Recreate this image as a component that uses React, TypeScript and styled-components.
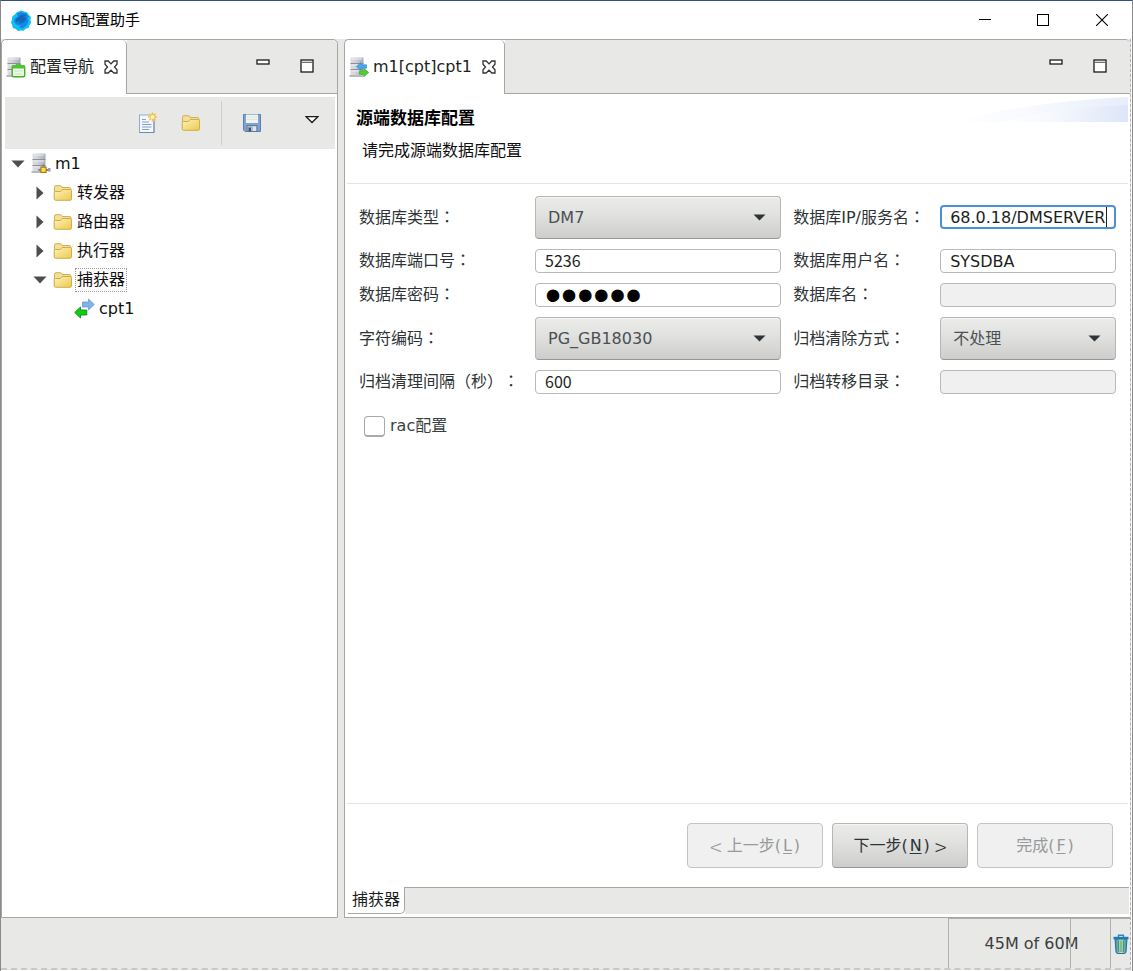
import React, { useState } from "react";
import styled, { createGlobalStyle, css } from "styled-components";

const GlobalStyle = createGlobalStyle`
  *, *::before, *::after { box-sizing: border-box; }
  body {
    margin: 0;
    background: #ffffff;
    color: #1c1f20;
    font-family: "DejaVu Sans", "Noto Sans CJK SC", sans-serif;
    font-size: 16px;
    line-height: 24px;
  }
  button, input, select { font: inherit; color: inherit; margin: 0; }
  ul { list-style: none; margin: 0; padding: 0; }
`;

const cjk = css`
  font-family: "Noto Sans CJK SC", sans-serif;
`;

/* Window frame */

const Frame = styled.div`
  display: flex;
  flex-direction: column;
  min-height: 100vh;
  border: 1px solid #8a8a8a;
  border-top-color: #2f5080;
  border-bottom: 0;
  background: #ffffff;
`;

const TitleBar = styled.header`
  display: flex;
  align-items: center;
  height: 38px;
  padding-left: 10px;
  background: #ffffff;
`;

const TitleText = styled.h1`
  flex: 1;
  margin: 0 0 2px 4px;
  font-family: "Noto Sans", "Noto Sans CJK SC", sans-serif;
  font-size: 15px;
  font-weight: 400;
  line-height: 24px;
  color: #000000;
`;

const IconButton = styled.button<{ $width?: number }>`
  display: flex;
  align-items: center;
  justify-content: center;
  width: ${(p) => p.$width ?? 32}px;
  height: 32px;
  padding: 0;
  border: 0;
  background: none;
`;

const Workbench = styled.div`
  display: flex;
  flex-direction: column;
  flex: 1;
  margin: 0 1px 1px 0;
  border-right: 1px dashed #b4b4b4;
  border-bottom: 2px dashed #c8c8c8;
  background: #e8e8e7;
`;

const Panels = styled.div`
  display: flex;
  flex: 1;
  gap: 6px;
`;

/* Panels and tabs */

const panel = css`
  display: flex;
  flex-direction: column;
  border: 1px solid #a6a6a5;
  border-radius: 5px 5px 0 0;
  background: #ffffff;
`;

const NavPanel = styled.aside`
  ${panel}
  flex: 0 0 337px;
`;

const EditorPanel = styled.main`
  ${panel}
  flex: 1;
  min-width: 0;
  border-right: 0;
`;

const TabBar = styled.div`
  display: flex;
  height: 54px;
`;

const Tab = styled.div`
  display: flex;
  align-items: center;
  padding: 0 8px 0 4px;
  border-right: 1px solid #a6a6a5;
  border-radius: 5px 5px 0 0;
  background: #ffffff;
`;

const TabLabel = styled.span`
  margin-left: 4px;
  white-space: nowrap;
`;

const TabClose = styled.button`
  display: flex;
  margin-left: 10px;
  padding: 0;
  border: 0;
  background: none;
`;

const TabBarRest = styled.div`
  display: flex;
  flex: 1;
  align-items: center;
  justify-content: flex-end;
  padding: 0 8px 2px 0;
  border-bottom: 1px solid #a6a6a5;
  border-radius: 0 5px 0 0;
  background: #e8e8e7;
`;

const Toolbar = styled.div`
  display: flex;
  align-items: center;
  justify-content: flex-end;
  height: 52px;
  margin: 3px 2px 0 3px;
  padding-right: 7px;
  background: #e8e8e7;
`;

const ToolGroup = styled.div`
  display: flex;
  gap: 11px;
`;

const ToolDivider = styled.span`
  width: 1px;
  height: 44px;
  margin: 0 14px;
  background: #cfcfce;
`;

const ToolMenu = styled.div`
  margin-left: 28px;
`;

/* Tree */

const TreeRow = styled.div<{ $level: number }>`
  display: flex;
  align-items: center;
  height: 29px;
  padding-left: ${(p) => 6 + p.$level * 22}px;
  color: #101010;
`;

const Twisty = styled.button`
  display: flex;
  align-items: center;
  justify-content: center;
  width: 20px;
  height: 20px;
  margin-right: 3px;
  padding: 0;
  border: 0;
  background: none;
`;

const TwistySpace = styled.span`
  width: 22px;
`;

const TreeLabel = styled.span<{ $focused?: boolean }>`
  margin-left: 3px;
  padding: 0 1px;
  line-height: 22px;
  outline: ${(p) => (p.$focused ? "1px dotted #9a9a9a" : "none")};
`;

/* Wizard */

const WizardHeader = styled.div`
  position: relative;
  height: 90px;
  margin: 0 2px;
  padding: 12px 0 0 9px;
  border-bottom: 1px solid #e4e4e4;
`;

const HeaderArt = styled.svg`
  position: absolute;
  top: 3px;
  right: 0;
`;

const Heading = styled.h2`
  margin: 0;
  font-size: 17px;
  font-weight: 700;
  line-height: 24px;
  color: #000000;
`;

const Description = styled.p`
  margin: 9px 0 0 6px;
  color: #101010;
`;

const Form = styled.form`
  display: flex;
  flex-direction: column;
  flex: 1;
`;

const Fields = styled.div`
  display: grid;
  grid-template-columns: 164px minmax(0, 7fr) 135px minmax(0, 5fr);
  grid-template-rows: 43px 24px 24px 43px 24px;
  gap: 10px 12px;
  align-items: center;
  padding: 12px 14px 0;
`;

const FieldLabel = styled.label`
  white-space: nowrap;
  text-spacing-trim: space-all;
  color: #2e3436;
`;

/* The traditional variant centres the full-width colon in its cell. */
const Colon = styled.span`
  font-family: "DejaVu Sans", "Noto Sans CJK TC", sans-serif;
`;

const TextInput = styled.input<{ $cjk?: boolean; $active?: boolean }>`
  width: 100%;
  height: 24px;
  padding: 0 9px;
  border: 1px solid #b9b9b6;
  border-radius: 4px;
  outline: 0;
  background: #ffffff;
  color: #1c1f20;
  line-height: 22px;
  ${(p) =>
    p.$cjk &&
    css`
      ${cjk}
      padding-bottom: 2px;
      line-height: 20px;
    `}
  ${(p) =>
    p.$active &&
    css`
      padding: 0 8px;
      border: 2px solid #4a90d9;
    `}
  &:disabled {
    background: #f0f0f0;
  }
`;

const PasswordInput = styled(TextInput)`
  font-family: "Liberation Sans", sans-serif;
  font-size: 46px;
  color: #000000;
`;

const ActiveField = styled.div`
  position: relative;
`;

const Caret = styled.span`
  position: absolute;
  top: 2px;
  right: 9px;
  width: 1px;
  height: 20px;
  background: #1c1f20;
`;

const SelectBox = styled.div`
  position: relative;
  height: 43px;
`;

const raised = css`
  border: 1px solid #b6b6b3;
  border-bottom-color: #979794;
  border-radius: 4px;
  background: linear-gradient(#ebebea, #e2e2e1 40%, #cdcdcc);
  box-shadow: inset 0 1px 0 #f6f6f5;
`;

const Select = styled.select`
  ${raised}
  width: 100%;
  height: 43px;
  padding: 0 40px 0 12px;
  appearance: none;
  color: #4b5052;
`;

const SelectArrow = styled.svg`
  position: absolute;
  top: 18px;
  right: 15px;
  pointer-events: none;
`;

const CheckRow = styled.label`
  display: flex;
  align-items: center;
  gap: 5px;
  margin: 20px 14px 0 19px;
  color: #3a3f41;
`;

const Checkbox = styled.input`
  width: 21px;
  height: 21px;
  appearance: none;
  border: 1px solid #a9a9a6;
  border-bottom-width: 2px;
  border-radius: 4px;
  background: #ffffff;
`;

const Actions = styled.div`
  display: flex;
  justify-content: flex-end;
  gap: 9px;
  margin: auto 2px 0;
  padding: 19px 15px 19px;
  border-top: 1px solid #e4e4e4;
`;

const ActionButton = styled.button`
  ${raised}
  display: flex;
  align-items: center;
  justify-content: center;
  width: 136px;
  height: 45px;
  padding: 0;
  color: #2e3436;
  &:disabled {
    border-color: #c4c4c2;
    background: #f0f0f0;
    box-shadow: none;
    color: #979a9b;
  }
`;

const Angle = styled.span<{ $side: "left" | "right" }>`
  ${cjk}
  margin: ${(p) => (p.$side === "left" ? "0 5px 0 0" : "0 0 0 5px")};
  font-size: 22px;
  font-weight: 300;
  line-height: 24px;
`;

const Mnemonic = styled.u`
  margin: 0 2px;
  text-underline-offset: 2px;
`;

const PageTabs = styled.div`
  display: flex;
  height: 27px;
  margin-bottom: 3px;
`;

const PageTab = styled.button`
  margin-left: 3px;
  padding: 0 4px;
  border: solid #a6a6a5;
  border-width: 0 1px 1px 0;
  border-radius: 0 0 5px 0;
  background: #ffffff;
  line-height: 24px;
`;

const PageTabsRest = styled.div`
  flex: 1;
  margin-right: 1px;
  border-top: 1px solid #a6a6a5;
  background: #e8e8e7;
`;

/* Status bar */

const StatusBar = styled.footer`
  display: flex;
  justify-content: flex-end;
  height: 50px;
`;

const HeapStatus = styled.div`
  position: relative;
  width: 163px;
  padding-left: 4px;
  border: solid #b0b0af;
  border-width: 1px 1px 0;
  text-align: center;
  line-height: 50px;
  color: #3a3f41;
`;

const HeapMark = styled.span`
  position: absolute;
  top: 0;
  bottom: 0;
  border-left: 1px solid #b0b0af;
`;

const TrashButton = styled.button`
  display: flex;
  align-items: center;
  width: 19px;
  padding: 0 0 0 2px;
  border: 0;
  border-top: 1px solid #b0b0af;
  background: none;
`;

/* Icons */

const AppLogo = () => (
  <svg width="21" height="21" viewBox="0 0 21 21" aria-hidden="true">
    <path d="M10 0.5l3 1 3 .7 1.700 2.600 2.300 2.200-.6 3 .8 2.500-1.600 2.500-.8 2.800-3 .9-2.200 2-2.800-.3-2.800.6-2.300-1.900-2.900-1.300-.7-3-1.100-2.600 1-2.800.2-3 2.600-1.900 2-2.300z" fill="#12bdf8" />
    <path d="M6 3.500l4-1.200 5 1 3 3.500-2 1 1.500 3-1.500 4-4 3.500-4-.5 2-2-4-.8-3-3 1-4 3-1z" fill="#1585dd" />
    <path d="M5 9l5-4 6-1-3 3 3 1-3 4-5 2 1-3-4 1z" fill="#1267bd" />
  </svg>
);

const CloseX = () => (
  <svg width="14" height="14" viewBox="0 0 14 14" aria-hidden="true">
    <path
      d="M1 1h3.200L7 3.900 9.800 1H13v3.200L10.500 7 13 9.800V13H9.800L7 10.100 4.200 13H1V9.800L3.500 7 1 4.200z"
      fill="#fff"
      stroke="#343434"
      strokeWidth="1.300"
    />
  </svg>
);

const MinimizeIcon = () => (
  <svg width="14" height="14" viewBox="0 0 14 14" aria-hidden="true">
    <rect x="1" y="1" width="12" height="4" fill="#fff" stroke="#1b1b1b" strokeWidth="1.300" />
  </svg>
);

const MaximizeIcon = () => (
  <svg width="14" height="14" viewBox="0 0 14 14" aria-hidden="true">
    <rect x="1" y="1" width="12" height="12" fill="#fff" stroke="#1b1b1b" strokeWidth="1.300" />
    <path d="M2 3.300h10" stroke="#4a4a4a" strokeWidth="1" />
  </svg>
);

const Server = () => (
  <g>
    <defs>
      <linearGradient id="bay" x1="0" x2="1">
        <stop offset="0" stopColor="#dcdee2" />
        <stop offset="0.350" stopColor="#d3d5da" />
        <stop offset="1" stopColor="#a7abb4" />
      </linearGradient>
    </defs>
    <path d="M2.500 0.500h11q1 0 1 1V18h-13V1.500q0-1 1-1z" fill="url(#bay)" />
    <path d="M3 2h10M3 8h10M3 14h10" stroke="#eceef1" strokeWidth="1.200" />
    <path d="M1.500 6.500h13M1.500 12.500h13" stroke="#8b8f98" strokeWidth="1.200" />
    <path d="M0.500 19h14.500" stroke="#9a9da4" strokeWidth="1.400" />
  </g>
);

const NavIcon = () => (
  <svg width="20" height="21" viewBox="0 0 20 21" aria-hidden="true">
    <Server />
    <rect x="6.200" y="8.700" width="12.500" height="11" rx="1.500" fill="#effae8" stroke="#3fb02a" strokeWidth="1.400" />
    <path d="M6.500 8.500Q6.500 8 7.500 8h2l1-1.200h4L15.500 8h2q1.200 0 1.200 1.200v2.300H6.500z" fill="#52c238" />
    <path d="M8.500 14h8M8.500 17h8" stroke="#c3e6b6" strokeWidth="1.200" />
  </svg>
);

const CaptureEditorIcon = () => (
  <svg width="20" height="21" viewBox="0 0 20 21" aria-hidden="true">
    <Server />
    <path d="M7.500 9.500L12 5.700v2.100h5.500v3.400H12v2.100z" fill="#4da6ee" stroke="#2b83d0" strokeWidth="0.600" />
    <path d="M19.700 15.500l-4.500-4v2.300H10.500v3.400h4.700v2.300z" fill="#4fd22c" stroke="#2fa51a" strokeWidth="0.600" />
  </svg>
);

const HostIcon = () => (
  <svg width="20" height="21" viewBox="0 0 20 21" aria-hidden="true">
    <Server />
    <path d="M12.500 11.500v3M7.500 17h3M15 17h4" stroke="#7183a6" strokeWidth="2" />
    <rect x="17" y="15" width="2.500" height="3.500" fill="#8b9dc0" />
    <rect x="9.900" y="14.200" width="5.200" height="5.200" fill="#ffdc50" stroke="#a9800f" strokeWidth="1.200" />
  </svg>
);

const FolderIcon = () => (
  <svg width="20" height="18" viewBox="0 0 20 18" aria-hidden="true">
    <defs>
      <linearGradient id="folder" x1="0" x2="1" y1="0" y2="1">
        <stop offset="0" stopColor="#fdf3b8" />
        <stop offset="1" stopColor="#ecc94f" />
      </linearGradient>
    </defs>
    <path d="M1.500 14V3.300Q1.500 1.700 3 1.700h4.300Q8.700 1.700 9.200 3.500h7.300Q17.800 3.500 17.800 5v9z" fill="#f4df96" stroke="#cfae56" strokeWidth="1" />
    <path d="M1.200 8.500Q1.200 7.500 2.200 7.500h5.300l1.700-2h8.300Q18.500 5.500 18.500 6.500v8.300q0 1.500-1.500 1.500H2.700q-1.500 0-1.500-1.500z" fill="url(#folder)" stroke="#d2ac48" strokeWidth="1" />
  </svg>
);

const NewFileIcon = () => (
  <svg width="20" height="22" viewBox="0 0 20 22" aria-hidden="true">
    <rect x="1.500" y="3" width="14.500" height="17.500" fill="#f4f8fe" stroke="#97a9c9" strokeWidth="1" />
    <path d="M1.500 20.500H16V9" fill="none" stroke="#6f89b5" strokeWidth="1" />
    <path d="M4 7.500h4M4 10h7M4 12.500h9.500M4 15h9.500M4 17.500h7" stroke="#86a0cc" strokeWidth="1" />
    <path d="M14.500 0.500v9M10 5h9M11.300 1.800l6.400 6.400M17.700 1.800l-6.400 6.400" stroke="#efc440" strokeWidth="1.400" />
    <circle cx="14.500" cy="5" r="2" fill="#fff3ad" />
  </svg>
);

const SaveIcon = () => (
  <svg width="20" height="20" viewBox="0 0 20 20" aria-hidden="true">
    <path d="M1.500 1.500h17v17H3L1.500 17z" fill="#7fa3d4" stroke="#5b7fb2" strokeWidth="1" />
    <path d="M4 1.500h12v8.500H4z" fill="#eff5ee" />
    <path d="M4.500 4h11M4.500 6.500h11" stroke="#d5e3d2" strokeWidth="0.800" />
    <path d="M5 12.500h10v6H5z" fill="#b3bcc9" stroke="#56708f" strokeWidth="0.800" />
    <path d="M6.500 14.500h2.500v4H6.500z" fill="#41546f" />
    <path d="M11 13.500h3V18h-3z" fill="#dfe4ea" />
  </svg>
);

const TransferIcon = () => (
  <svg width="21" height="21" viewBox="0 0 21 21" aria-hidden="true">
    <path d="M20.300 6.500L14.500 1v3H8.500v5h6v3z" fill="#7fb2ea" stroke="#5b93d3" strokeWidth="0.700" />
    <path d="M0.700 14.500L6.500 9v3h6.300v5H6.500v3z" fill="#0dcf12" stroke="#0a7f10" strokeWidth="0.800" />
  </svg>
);

const TrashIcon = () => (
  <svg width="16" height="20" viewBox="0 0 16 20" aria-hidden="true">
    <defs>
      <linearGradient id="bin" x1="0" x2="1">
        <stop offset="0" stopColor="#2384bd" />
        <stop offset="0.500" stopColor="#e6ea72" />
        <stop offset="1" stopColor="#2384bd" />
      </linearGradient>
    </defs>
    <path d="M2 5h12l-1 13q-.2 1.500-2 1.500H5Q3.200 19.500 3 18z" fill="url(#bin)" stroke="#1a74b0" strokeWidth="1" />
    <path d="M5.300 6.500l.4 11.500M8 6.500V18M10.700 6.500l-.4 11.500" stroke="#2f8fb0" strokeWidth="1" />
    <path d="M0.500 4h15" stroke="#1b7ab8" strokeWidth="2.400" />
    <path d="M5.500 3V1.200h5V3" fill="none" stroke="#2b88c0" strokeWidth="1.400" />
  </svg>
);

const Arrow = ({ open }: { open: boolean }) => (
  <svg width="14" height="14" viewBox="0 0 14 14" aria-hidden="true">
    <path d={open ? "M0.500 3.500h13L7 10.500z" : "M3.500 0.500v13l7-6.500z"} fill="#4d4d4d" />
  </svg>
);

/* Form parts */

type LabelProps = { id: string; text: string };

const Label = ({ id, text }: LabelProps) => (
  <FieldLabel htmlFor={id}>
    {text}
    <Colon>：</Colon>
  </FieldLabel>
);

const Dropdown = ({ id, options }: { id: string; options: string[] }) => (
  <SelectBox>
    <Select id={id} defaultValue={options[0]}>
      {options.map((o) => (
        <option key={o}>{o}</option>
      ))}
    </Select>
    <SelectArrow width="13" height="7" viewBox="0 0 13 7" aria-hidden="true">
      <path d="M0.500 0.500h12L6.500 6.500z" fill="#2e3436" />
    </SelectArrow>
  </SelectBox>
);

const PanelControls = () => (
  <TabBarRest>
    <IconButton type="button" $width={44} aria-label="最小化">
      <MinimizeIcon />
    </IconButton>
    <IconButton type="button" $width={44} aria-label="最大化">
      <MaximizeIcon />
    </IconButton>
  </TabBarRest>
);

const folders = [
  { name: "转发器", open: false },
  { name: "路由器", open: false },
  { name: "执行器", open: false },
  { name: "捕获器", open: true },
];

const NavTree = () => (
  <ul>
    <li>
      <TreeRow $level={0}>
        <Twisty type="button" aria-label="折叠 m1">
          <Arrow open />
        </Twisty>
        <HostIcon />
        <TreeLabel>m1</TreeLabel>
      </TreeRow>
      <ul>
        {folders.map((f) => (
          <li key={f.name}>
            <TreeRow $level={1}>
              <Twisty type="button" aria-label={f.name}>
                <Arrow open={f.open} />
              </Twisty>
              <FolderIcon />
              <TreeLabel $focused={f.open}>{f.name}</TreeLabel>
            </TreeRow>
            {f.open && (
              <ul>
                <li>
                  <TreeRow $level={2}>
                    <TwistySpace />
                    <TransferIcon />
                    <TreeLabel>cpt1</TreeLabel>
                  </TreeRow>
                </li>
              </ul>
            )}
          </li>
        ))}
      </ul>
    </li>
  </ul>
);

export default function App() {
  const [server, setServer] = useState("68.0.18/DMSERVER");

  return (
    <>
      <GlobalStyle />
      <Frame>
        <TitleBar>
          <AppLogo />
          <TitleText>DMHS配置助手</TitleText>
          <IconButton type="button" $width={58} aria-label="最小化窗口">
            <svg width="12" height="12" viewBox="0 0 12 12">
              <path d="M0 5.500h12" stroke="#000" />
            </svg>
          </IconButton>
          <IconButton type="button" $width={58} aria-label="最大化窗口">
            <svg width="12" height="12" viewBox="0 0 12 12">
              <rect x="0.500" y="0.500" width="11" height="11" fill="none" stroke="#000" />
            </svg>
          </IconButton>
          <IconButton type="button" $width={60} aria-label="关闭窗口">
            <svg width="12" height="12" viewBox="0 0 12 12">
              <path d="M0 0l12 12M12 0L0 12" stroke="#000" strokeWidth="1.100" />
            </svg>
          </IconButton>
        </TitleBar>

        <Workbench>
          <Panels>
            <NavPanel>
              <TabBar>
                <Tab>
                  <NavIcon />
                  <TabLabel>配置导航</TabLabel>
                  <TabClose type="button" aria-label="关闭">
                    <CloseX />
                  </TabClose>
                </Tab>
                <PanelControls />
              </TabBar>
              <Toolbar>
                <ToolGroup>
                  <IconButton type="button" aria-label="新建">
                    <NewFileIcon />
                  </IconButton>
                  <IconButton type="button" aria-label="打开">
                    <FolderIcon />
                  </IconButton>
                </ToolGroup>
                <ToolDivider />
                <IconButton type="button" aria-label="保存">
                  <SaveIcon />
                </IconButton>
                <ToolMenu>
                  <IconButton type="button" aria-label="菜单">
                    <svg width="14" height="16" viewBox="0 0 14 16">
                      <path d="M1.200 1.700h11.600L7 7.500z" fill="#fff" stroke="#1b1b1b" strokeWidth="1.300" />
                    </svg>
                  </IconButton>
                </ToolMenu>
              </Toolbar>
              <NavTree />
            </NavPanel>

            <EditorPanel>
              <TabBar>
                <Tab>
                  <CaptureEditorIcon />
                  <TabLabel>m1[cpt]cpt1</TabLabel>
                  <TabClose type="button" aria-label="关闭">
                    <CloseX />
                  </TabClose>
                </Tab>
                <PanelControls />
              </TabBar>
              <WizardHeader>
                <HeaderArt width="176" height="25" viewBox="0 0 176 25" aria-hidden="true">
                  <defs>
                    <linearGradient id="fan" x1="0" x2="1">
                      <stop offset="0" stopColor="#ffffff" />
                      <stop offset="0.400" stopColor="#f6f8fe" />
                      <stop offset="1" stopColor="#dde6f8" />
                    </linearGradient>
                  </defs>
                  <path d="M0 25Q80 4 176 0v25z" fill="url(#fan)" opacity="0.700" />
                  <path d="M50 25Q100 11 176 8v17z" fill="url(#fan)" />
                </HeaderArt>
                <Heading>源端数据库配置</Heading>
                <Description>请完成源端数据库配置</Description>
              </WizardHeader>

              <Form onSubmit={(e) => e.preventDefault()}>
                <Fields>
                  <Label id="db-type" text="数据库类型" />
                  <Dropdown id="db-type" options={["DM7"]} />
                  <Label id="db-server" text="数据库IP/服务名" />
                  <ActiveField>
                    <TextInput id="db-server" $active value={server} onChange={(e) => setServer(e.target.value)} />
                    <Caret />
                  </ActiveField>

                  <Label id="db-port" text="数据库端口号" />
                  <TextInput id="db-port" $cjk defaultValue="5236" />
                  <Label id="db-user" text="数据库用户名" />
                  <TextInput id="db-user" defaultValue="SYSDBA" />

                  <Label id="db-pass" text="数据库密码" />
                  <PasswordInput id="db-pass" type="password" defaultValue="SYSDBA" />
                  <Label id="db-name" text="数据库名" />
                  <TextInput id="db-name" disabled />

                  <Label id="charset" text="字符编码" />
                  <Dropdown id="charset" options={["PG_GB18030"]} />
                  <Label id="clear-mode" text="归档清除方式" />
                  <Dropdown id="clear-mode" options={["不处理"]} />

                  <Label id="interval" text="归档清理间隔（秒）" />
                  <TextInput id="interval" $cjk defaultValue="600" />
                  <Label id="move-dir" text="归档转移目录" />
                  <TextInput id="move-dir" disabled />
                </Fields>
                <CheckRow>
                  <Checkbox type="checkbox" />
                  rac配置
                </CheckRow>
                <Actions>
                  <ActionButton type="button" disabled>
                    <Angle $side="left">&lt;</Angle>上一步(<Mnemonic>L</Mnemonic>)
                  </ActionButton>
                  <ActionButton type="submit">
                    下一步(<Mnemonic>N</Mnemonic>)<Angle $side="right">&gt;</Angle>
                  </ActionButton>
                  <ActionButton type="button" disabled>
                    完成(<Mnemonic>F</Mnemonic>)
                  </ActionButton>
                </Actions>
              </Form>

              <PageTabs>
                <PageTab type="button">捕获器</PageTab>
                <PageTabsRest />
              </PageTabs>
            </EditorPanel>
          </Panels>

          <StatusBar>
            <HeapStatus>
              <HeapMark style={{ left: `${(45 / 60) * 100}%` }} />
              45M of 60M
            </HeapStatus>
            <TrashButton type="button" aria-label="回收内存">
              <TrashIcon />
            </TrashButton>
          </StatusBar>
        </Workbench>
      </Frame>
    </>
  );
}
